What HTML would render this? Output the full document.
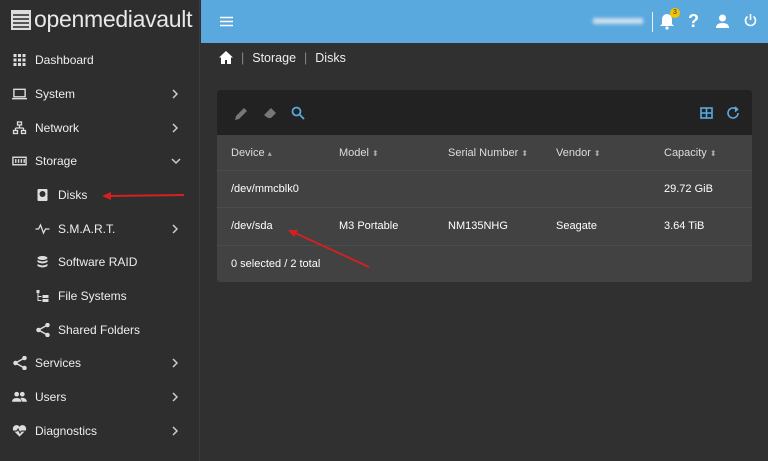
<!DOCTYPE html><html><head><style>
*{margin:0;padding:0;box-sizing:border-box}
body{width:768px;height:461px;background:#303030;font-family:"Liberation Sans",sans-serif;color:#fff;position:relative;overflow:hidden;font-size:12px}
#sb{position:absolute;left:0;top:0;width:200px;height:461px;background:#2e2e2e;border-right:1px solid #3c3c3c}
.logo{position:absolute;left:11px;top:6px;font-size:23px;color:#e8e8e8;letter-spacing:-0.3px}
.logo span.b{display:inline-block;width:20px;height:20px;border:2px solid #ddd;vertical-align:-3px;margin-right:3px;background:repeating-linear-gradient(#ddd 0 2px,#555 2px 4px)}
.it{position:absolute;left:0;width:200px;height:34px;line-height:34px;font-size:12px;color:#eee}
.it .ic{position:absolute;left:12px;top:10px;width:15px;height:14px}
.it .t{position:absolute;left:35px}
.it.s .ic{left:35px}.it.s .t{left:58px}
.it .ch{position:absolute;left:171px;top:12px;width:8px;height:10px}
#hd{position:absolute;left:201px;top:0;right:0;height:43px;background:#5aa9de}
.bc{position:absolute;left:219px;top:51px;font-size:12.5px;color:#eee}
#card{position:absolute;left:217px;top:90px;width:535px;height:192px;background:#424242;border-radius:3px;overflow:hidden}
.tb{height:45px;background:#222}
.row{position:absolute;left:0;width:535px;height:37px;border-top:1px solid #4c4c4c;line-height:37px;font-size:11px}
.row span{position:absolute}
.th span{color:#ddd}
.th i{font-style:normal;font-size:8px;color:#aaa}
</style></head><body>
<div id="sb">
<div class="logo"><span class="b"></span>openmediavault</div>
<div class="it" style="top:43px"><svg class="ic" viewBox="0 0 14 14" fill="#ddd"><rect x="1" y="1" width="3" height="3"/><rect x="5.5" y="1" width="3" height="3"/><rect x="10" y="1" width="3" height="3"/><rect x="1" y="5.5" width="3" height="3"/><rect x="5.5" y="5.5" width="3" height="3"/><rect x="10" y="5.5" width="3" height="3"/><rect x="1" y="10" width="3" height="3"/><rect x="5.5" y="10" width="3" height="3"/><rect x="10" y="10" width="3" height="3"/></svg><span class="t">Dashboard</span></div>
<div class="it" style="top:77px"><svg class="ic" viewBox="0 0 16 14" fill="none" stroke="#ddd" stroke-width="1.5"><rect x="2" y="2" width="12" height="8"/><path d="M0 12h16"/></svg><span class="t">System</span><svg class="ch" viewBox="0 0 8 10" fill="none" stroke="#ccc" stroke-width="1.5"><path d="M2 1l4 4-4 4"/></svg></div>
<div class="it" style="top:111px"><svg class="ic" viewBox="0 0 14 14" fill="none" stroke="#ddd" stroke-width="1.3"><rect x="5" y="1" width="4" height="3"/><path d="M7 4v3M3 7h8M3 7v2M11 7v2"/><rect x="1" y="9.5" width="4" height="3"/><rect x="9" y="9.5" width="4" height="3"/></svg><span class="t">Network</span><svg class="ch" viewBox="0 0 8 10" fill="none" stroke="#ccc" stroke-width="1.5"><path d="M2 1l4 4-4 4"/></svg></div>
<div class="it" style="top:144px"><svg class="ic" viewBox="0 0 16 14" fill="none" stroke="#ddd" stroke-width="1.5"><rect x="1" y="3" width="14" height="8"/><path d="M4 5v4M7 5v4M10 5v4M13 5v4"/></svg><span class="t">Storage</span><svg class="ch" style="width:10px" viewBox="0 0 10 10" fill="none" stroke="#ccc" stroke-width="1.5"><path d="M1 3l4 4 4-4"/></svg></div>
<div class="it s" style="top:178px"><svg class="ic" viewBox="0 0 14 14"><rect x="2" y="1" width="10" height="12" rx="1" fill="#ddd"/><circle cx="7" cy="6" r="3" fill="#2e2e2e"/></svg><span class="t">Disks</span></div>
<div class="it s" style="top:212px"><svg class="ic" viewBox="0 0 14 14" fill="none" stroke="#ddd" stroke-width="1.3"><path d="M0 7h3l2-4 3 8 2-4h4"/></svg><span class="t">S.M.A.R.T.</span><svg class="ch" viewBox="0 0 8 10" fill="none" stroke="#ccc" stroke-width="1.5"><path d="M2 1l4 4-4 4"/></svg></div>
<div class="it s" style="top:245px"><svg class="ic" viewBox="0 0 14 14" fill="#ddd"><ellipse cx="7" cy="3" rx="5" ry="2"/><path d="M2 5q5 3 10 0v2q-5 3-10 0zM2 9q5 3 10 0v2q-5 3-10 0z"/></svg><span class="t">Software RAID</span></div>
<div class="it s" style="top:279px"><svg class="ic" viewBox="0 0 14 14" fill="#ddd"><rect x="1" y="1" width="3" height="3"/><rect x="2" y="4" width="1" height="8"/><rect x="3" y="7" width="3" height="1"/><rect x="3" y="11" width="3" height="1"/><rect x="7" y="6" width="6" height="3"/><rect x="7" y="10" width="6" height="3"/></svg><span class="t">File Systems</span></div>
<div class="it s" style="top:313px"><svg class="ic" viewBox="0 0 14 14" fill="none" stroke="#ddd" stroke-width="1.5"><path d="M12 2L3 7l9 5"/><circle cx="12" cy="2" r="1.5" fill="#ddd"/><circle cx="3" cy="7" r="1.5" fill="#ddd"/><circle cx="12" cy="12" r="1.5" fill="#ddd"/></svg><span class="t">Shared Folders</span></div>
<div class="it" style="top:346px"><svg class="ic" viewBox="0 0 14 14" fill="none" stroke="#ddd" stroke-width="1.5"><path d="M12 2L3 7l9 5"/><circle cx="12" cy="2" r="1.5" fill="#ddd"/><circle cx="3" cy="7" r="1.5" fill="#ddd"/><circle cx="12" cy="12" r="1.5" fill="#ddd"/></svg><span class="t">Services</span><svg class="ch" viewBox="0 0 8 10" fill="none" stroke="#ccc" stroke-width="1.5"><path d="M2 1l4 4-4 4"/></svg></div>
<div class="it" style="top:380px"><svg class="ic" viewBox="0 0 16 14" fill="#ddd"><circle cx="5" cy="4" r="2.5"/><circle cx="11" cy="4" r="2.5"/><path d="M0 12q0-4 5-4t5 4zM9 8q6-1 7 4h-5z"/></svg><span class="t">Users</span><svg class="ch" viewBox="0 0 8 10" fill="none" stroke="#ccc" stroke-width="1.5"><path d="M2 1l4 4-4 4"/></svg></div>
<div class="it" style="top:414px"><svg class="ic" viewBox="0 0 16 14" fill="#ddd"><path d="M8 13L1.5 6.5A3.5 3.5 0 0 1 8 2.5a3.5 3.5 0 0 1 6.5 4z"/><path d="M2 7h3l1.5-2 2 4 1.5-2h4" stroke="#2e2e2e" stroke-width="1.2" fill="none"/></svg><span class="t">Diagnostics</span><svg class="ch" viewBox="0 0 8 10" fill="none" stroke="#ccc" stroke-width="1.5"><path d="M2 1l4 4-4 4"/></svg></div>
<svg style="position:absolute;left:100px;top:190px" width="90" height="12"><path d="M8 6L84 5" stroke="#d62020" stroke-width="2"/><path d="M2 6l9-4v8z" fill="#d62020"/></svg>
</div>
<div id="hd">
<svg style="position:absolute;left:19px;top:16px" width="13" height="11"><path d="M0 1.5h13M0 5.5h13M0 9.5h13" stroke="#fff" stroke-width="1.6"/></svg>
<div style="position:absolute;left:392px;top:18px;width:50px;height:6px;background:#c8ddee;filter:blur(1.5px)"></div>
<div style="position:absolute;left:451px;top:12px;width:1px;height:20px;background:#e8f2fa"></div>
<svg style="position:absolute;left:458px;top:12px" width="16" height="18" viewBox="0 0 16 18" fill="#fff"><path d="M8 2a5 5 0 0 0-5 5v5l-2 2h14l-2-2V7a5 5 0 0 0-5-5z"/><circle cx="8" cy="16" r="1.6"/></svg>
<div style="position:absolute;left:469px;top:8px;width:10px;height:10px;border-radius:50%;background:#f5c400;color:#333;font-size:7px;text-align:center;line-height:10px">3</div>
<div style="position:absolute;left:487px;top:11px;font-size:18px;font-weight:bold">?</div>
<svg style="position:absolute;left:514px;top:14px" width="15" height="14" fill="#fff"><circle cx="7.5" cy="4" r="3.5"/><path d="M1 14q0-5 6.5-5t6.5 5z"/></svg>
<svg style="position:absolute;left:543px;top:13px" width="13" height="15" fill="none" stroke="#fff" stroke-width="1.6"><path d="M6.5 1v6"/><path d="M3.5 3.5a5 5 0 1 0 6 0"/></svg>
</div>
<div class="bc"><svg width="14" height="13" style="vertical-align:-2px" fill="#fff"><path d="M7 0L0 6.5h2V13h4V9h2v4h4V6.5h2z"/></svg><span style="color:#888;margin:0 8px">|</span>Storage<span style="color:#888;margin:0 8px">|</span>Disks</div>
<div id="card">
<div class="tb">
<svg style="position:absolute;left:18px;top:17px" width="13" height="13" fill="#777"><path d="M0 13l1-4 8-8 3 3-8 8z"/></svg>
<svg style="position:absolute;left:46px;top:17px" width="14" height="13" fill="#777"><path d="M1 8l7-7 5 5-5 5H5z"/></svg>
<svg style="position:absolute;left:74px;top:16px" width="14" height="14" fill="none" stroke="#5aa9de" stroke-width="1.8"><circle cx="5.5" cy="5.5" r="4"/><path d="M8.5 8.5l4.5 4.5"/></svg>
<svg style="position:absolute;left:483px;top:17px" width="13" height="12" fill="none" stroke="#5aa9de" stroke-width="1.6"><rect x="1" y="1" width="11" height="10"/><path d="M1 6h11M6.5 1v10"/></svg>
<svg style="position:absolute;left:509px;top:16px" width="15" height="14" fill="none" stroke="#5aa9de" stroke-width="1.6"><path d="M12 7a5 5 0 1 1-2-4"/><path d="M9 1l2.5 2.3L9 5.5" fill="#5aa9de"/></svg>
</div>
<div class="row th" style="top:45px;border-top:none;height:35px;line-height:37px"><span style="left:14px">Device <i>▴</i></span><span style="left:122px">Model <i>⬍</i></span><span style="left:231px">Serial Number <i>⬍</i></span><span style="left:339px">Vendor <i>⬍</i></span><span style="left:447px">Capacity <i>⬍</i></span></div>
<div class="row" style="top:80px"><span style="left:14px">/dev/mmcblk0</span><span style="left:447px">29.72 GiB</span></div>
<div class="row" style="top:117px"><span style="left:14px">/dev/sda</span><span style="left:122px">M3 Portable</span><span style="left:231px">NM135NHG</span><span style="left:339px">Seagate</span><span style="left:447px">3.64 TiB</span></div>
<div class="row" style="top:155px"><span style="left:14px">0 selected / 2 total</span></div>
</div>
<svg style="position:absolute;left:285px;top:228px" width="90" height="42"><path d="M8 4L84 39" stroke="#d62020" stroke-width="1.8"/><path d="M3 2l10 0-4 7z" fill="#d62020"/></svg>
</body></html>
